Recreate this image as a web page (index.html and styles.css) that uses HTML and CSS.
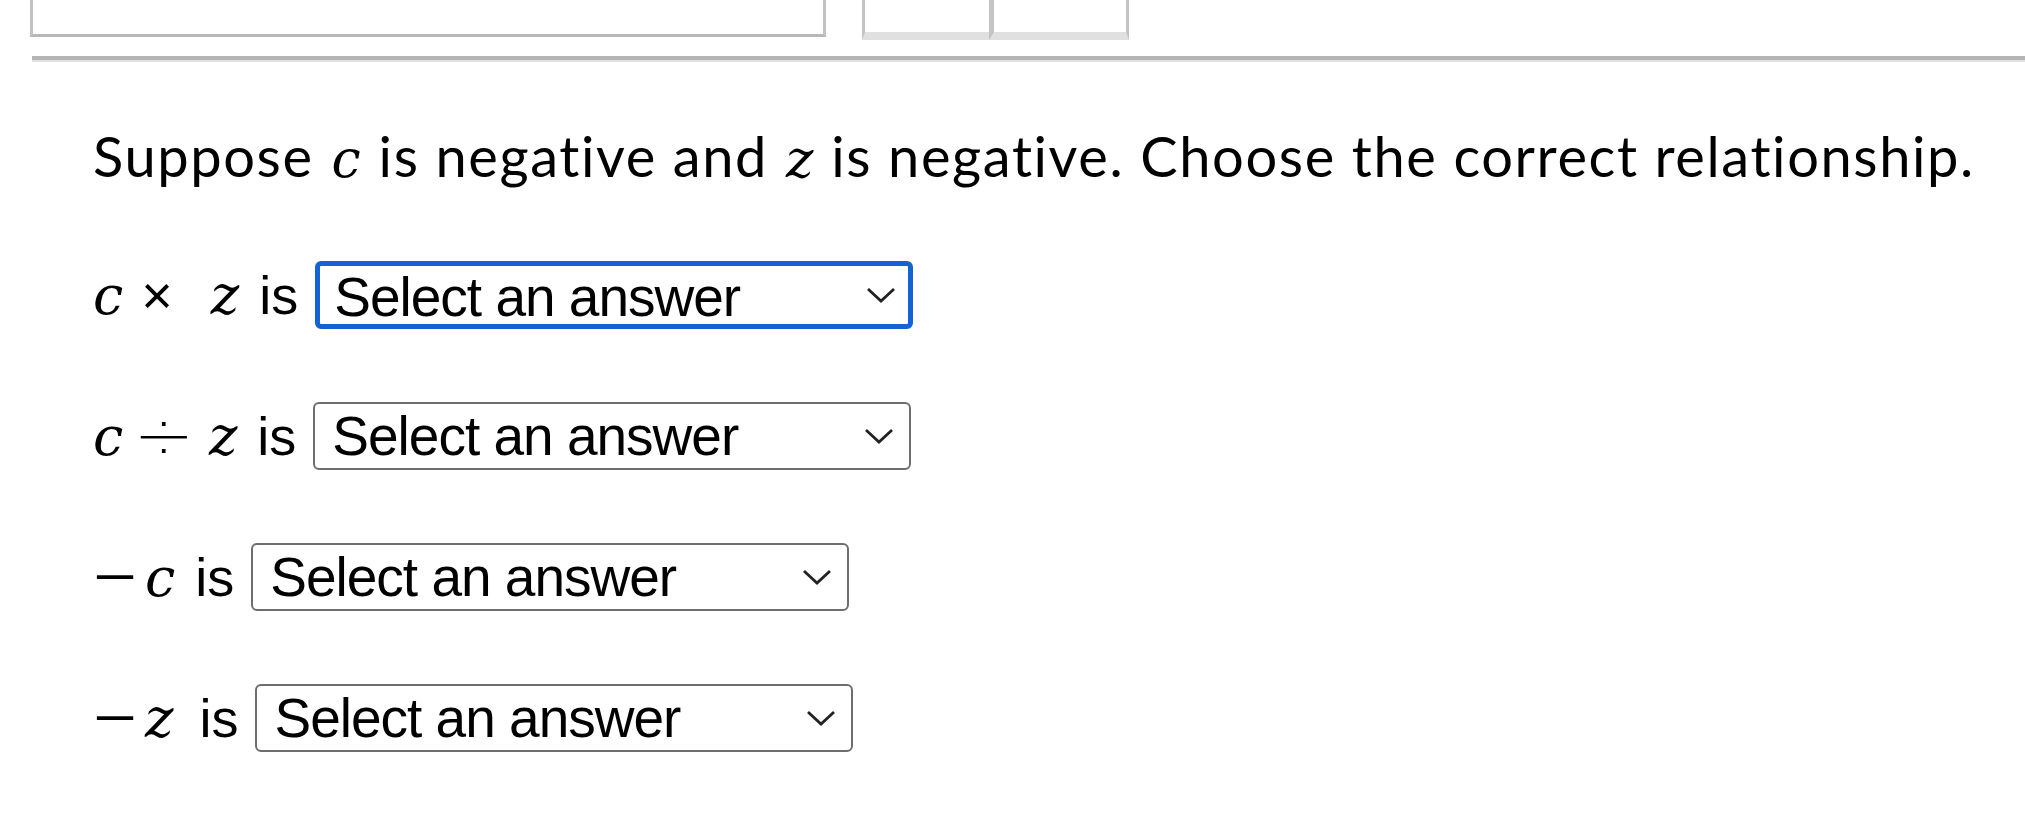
FILE: index.html
```html
<!DOCTYPE HTML><html>
<head>
  <title>Question</title>
  <meta name="viewport" content="width=device-width, initial-scale=1">
  <meta charset="UTF-8">
  <link rel="stylesheet" href="styles.css">
</head>
<body>
  <div class="topbar">
    <div class="field"></div>
    <div class="btn-group">
      <span class="tab"></span>
      <span class="tab tab-last"></span>
    </div>
  </div>
  <div class="rule"></div>

  <div class="question">
    <p class="prompt">Suppose <span class="mi">c</span> is negative and <span class="mi">z</span> is negative. Choose the correct relationship.</p>

    <div class="row">
      <span class="mi">c</span><span class="mo mo-times">×</span><span class="mi">z</span><span class="is">is</span>
      <select class="answer focused"><option>Select an answer</option></select>
    </div>
    <div class="row">
      <span class="mi">c</span><span class="mo mo-div">÷</span><span class="mi">z</span><span class="is">is</span>
      <select class="answer"><option>Select an answer</option></select>
    </div>
    <div class="row">
      <span class="neg">−</span><span class="mi">c</span><span class="is">is</span>
      <select class="answer"><option>Select an answer</option></select>
    </div>
    <div class="row">
      <span class="neg">−</span><span class="mi">z</span><span class="is is-wide">is</span>
      <select class="answer"><option>Select an answer</option></select>
    </div>
  </div>
</body>
</html>
```

FILE: styles.css
```css
html {font-family: "Liberation Sans", Arial, sans-serif; color: #000;}
body {margin: 0; background: #fff;}

.topbar {display: flex; height: 40px; padding-left: 30px;}
.field {
	width: 790px;
	height: 34px;
	border: 3px solid #c2c2c2;
	border-top: none;
	border-bottom-color: #b8b8b8;
}
.btn-group {display: flex; margin-left: 36px; height: 40px;}
.tab {
	width: 124px;
	height: 32px;
	border-left: 3px solid #c4c4c4;
	border-bottom: 8px solid #e0e0e0;
}
.tab-last {width: 132px; border-right: 3px solid #c4c4c4; border-left-width: 5px;}

.rule {margin: 16px 0 0 32px; border-top: 4px solid #b4b4b4; height: 2px; background: #e2e2e2;}

.question {padding-left: 93px;}

.prompt {
	font-family: Lato, "Open Sans", sans-serif;
	font-size: 56px;
	letter-spacing: 1.6px;
	line-height: 68px;
	margin: 60px 0 0 0;
	white-space: nowrap;
}

.mi {font-family: "DejaVu Serif", "Liberation Serif", serif; font-style: italic; font-size: 54px; letter-spacing: 0;}
.prompt .mi {font-size: 52px; margin: 0 2px;}
.mo {font-family: "Liberation Sans", Arial, sans-serif;}
.mo-times {font-size: 54px; margin: 0 38px 0 18px;}
.mo-div {font-family: "DejaVu Sans", sans-serif; font-weight: 200; font-size: 64px; margin: 0 18px 0 14px; transform: scaleX(1.15);}
.neg {font-family: "Liberation Serif", serif; font-size: 78px; margin-right: 8px; line-height: 1;}

.row {display: flex; align-items: center; height: 68px; margin-top: 73px;}
.row:first-of-type {margin-top: 68px;}
.is {font-size: 54px; margin-left: 20px; margin-right: 17px;}
.is-wide {margin-left: 26px;}

.answer {
	appearance: none;
	-webkit-appearance: none;
	width: 598px;
	height: 68px;
	padding: 0 60px 0 17px;
	font-family: "Liberation Sans", Arial, sans-serif;
	font-size: 55px;
	letter-spacing: -1px;
	color: #000;
	background: #fff url("data:image/svg+xml,%3Csvg xmlns='http://www.w3.org/2000/svg' width='32' height='20' viewBox='0 0 32 20'%3E%3Cpath d='M3 4 L16 16 L29 4' fill='none' stroke='%23222' stroke-width='2.8'/%3E%3C/svg%3E") no-repeat right 14px center;
	border: 2px solid #6e6e6e;
	border-radius: 6px;
	box-sizing: border-box;
	margin: 0;
}
.answer.focused {border: 5px solid #1463d3; padding-left: 14px; background-position: right 11px center;}
```
